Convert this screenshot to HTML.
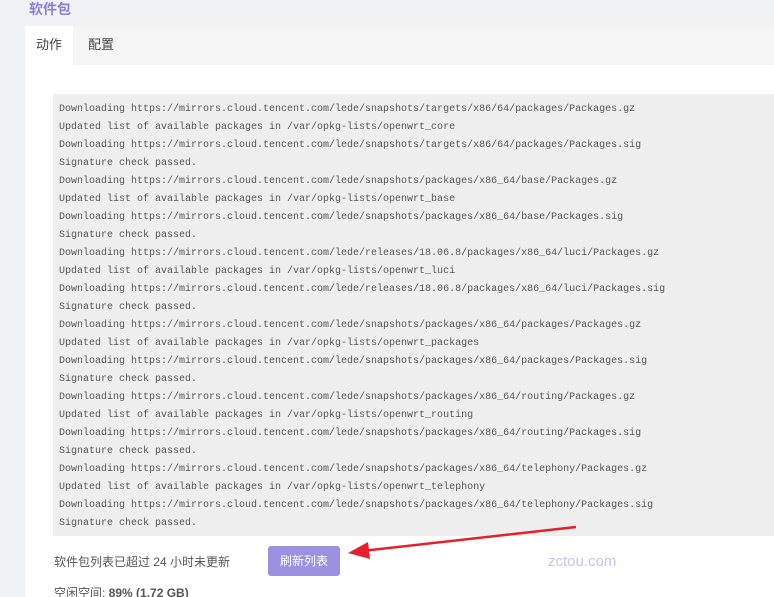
<!DOCTYPE html>
<html><head><meta charset="utf-8"><style>
html,body{margin:0;width:774px;height:597px;overflow:hidden}
body{background:#f0f2f5;font-family:"Liberation Sans","Noto Sans CJK SC",sans-serif;position:relative}
.title{position:absolute;left:29px;top:0px;color:#8b7fd6;font-size:14px;font-weight:bold;line-height:18px}
.card{position:absolute;left:25px;top:26px;width:749px;height:571px;background:#fff;overflow:hidden}
.tabs{position:absolute;left:0;top:0;width:760px;height:39px;background:#f5f5f5}
.tab{position:absolute;top:0;height:39px;line-height:38px;font-size:13px;color:#444}
.log{position:absolute;left:28px;top:68px;width:730px;height:442px;background:#eeeeee}
.log pre{margin:0;position:absolute;left:6px;top:7px;font-family:"Liberation Mono",monospace;font-size:10px;line-height:18px;color:#555}
.msg{position:absolute;left:29px;top:527px;font-size:12px;color:#555}
.btn{position:absolute;left:243px;top:520px;width:72px;height:30px;background:#9b91e0;border-radius:3px;color:#fff;font-size:12px;line-height:30px;text-align:center}
.wm{position:absolute;left:523px;top:527px;color:#c9c2ef;font-size:15px}
.free{position:absolute;left:29px;top:558px;font-size:12px;color:#555}
</style></head><body>
<div class="title">软件包</div>
<div class="card">
<div class="tabs"><div class="tab" style="left:0;width:48px;background:#fff;text-align:center">动作</div><div class="tab" style="left:63px">配置</div></div>
<div class="log"><pre>Downloading https://mirrors.cloud.tencent.com/lede/snapshots/targets/x86/64/packages/Packages.gz
Updated list of available packages in /var/opkg-lists/openwrt_core
Downloading https://mirrors.cloud.tencent.com/lede/snapshots/targets/x86/64/packages/Packages.sig
Signature check passed.
Downloading https://mirrors.cloud.tencent.com/lede/snapshots/packages/x86_64/base/Packages.gz
Updated list of available packages in /var/opkg-lists/openwrt_base
Downloading https://mirrors.cloud.tencent.com/lede/snapshots/packages/x86_64/base/Packages.sig
Signature check passed.
Downloading https://mirrors.cloud.tencent.com/lede/releases/18.06.8/packages/x86_64/luci/Packages.gz
Updated list of available packages in /var/opkg-lists/openwrt_luci
Downloading https://mirrors.cloud.tencent.com/lede/releases/18.06.8/packages/x86_64/luci/Packages.sig
Signature check passed.
Downloading https://mirrors.cloud.tencent.com/lede/snapshots/packages/x86_64/packages/Packages.gz
Updated list of available packages in /var/opkg-lists/openwrt_packages
Downloading https://mirrors.cloud.tencent.com/lede/snapshots/packages/x86_64/packages/Packages.sig
Signature check passed.
Downloading https://mirrors.cloud.tencent.com/lede/snapshots/packages/x86_64/routing/Packages.gz
Updated list of available packages in /var/opkg-lists/openwrt_routing
Downloading https://mirrors.cloud.tencent.com/lede/snapshots/packages/x86_64/routing/Packages.sig
Signature check passed.
Downloading https://mirrors.cloud.tencent.com/lede/snapshots/packages/x86_64/telephony/Packages.gz
Updated list of available packages in /var/opkg-lists/openwrt_telephony
Downloading https://mirrors.cloud.tencent.com/lede/snapshots/packages/x86_64/telephony/Packages.sig
Signature check passed.</pre></div>
<div class="msg">软件包列表已超过 24 小时未更新</div>
<div class="btn">刷新列表</div>
<div class="wm">zctou.com</div>
<div class="free">空闲空间: <b>89% (1.72 GB)</b></div>
</div>
<svg style="position:absolute;left:0;top:0" width="774" height="597"><line x1="576" y1="527" x2="362" y2="551" stroke="#e5202a" stroke-width="2.5"/><polygon points="348,553 368,542 370,559" fill="#e5202a"/></svg>
</body></html>
